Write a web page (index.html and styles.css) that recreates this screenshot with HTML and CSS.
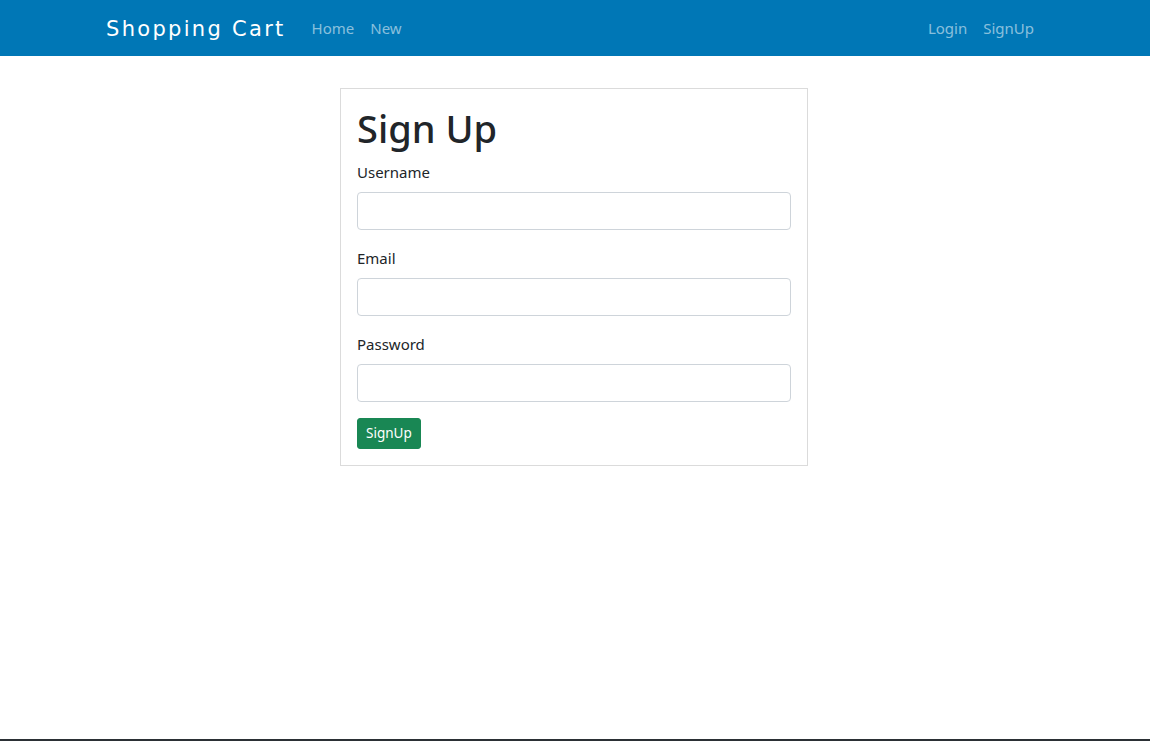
FILE: index.html
```html
<!DOCTYPE html>
<html lang="en">
<head>
<meta charset="utf-8">
<title>Shopping Cart</title>
<link rel="stylesheet" href="styles.css">
</head>
<body>
<div class="page">
  <nav class="navbar">
    <div class="container nav-inner">
      <a class="brand" href="#">Shopping Cart</a>
      <ul class="nav-links">
        <li><a href="#">Home</a></li>
        <li><a href="#">New</a></li>
      </ul>
      <ul class="nav-links nav-right">
        <li><a href="#">Login</a></li>
        <li><a href="#">SignUp</a></li>
      </ul>
    </div>
  </nav>
  <main class="main">
    <div class="card">
      <h1 class="title">Sign Up</h1>
      <form class="form">
        <div class="field">
          <label class="label" for="username">Username</label>
          <input class="input" id="username" type="text">
        </div>
        <div class="field">
          <label class="label" for="email">Email</label>
          <input class="input" id="email" type="email">
        </div>
        <div class="field">
          <label class="label" for="password">Password</label>
          <input class="input" id="password" type="password">
        </div>
        <button class="btn" type="button">SignUp</button>
      </form>
    </div>
  </main>
  <footer class="footer"></footer>
</div>
</body>
</html>
```
FILE: styles.css
```css
* { box-sizing: border-box; }
html, body { margin: 0; padding: 0; }
body {
  font-family: "Noto Sans", "Open Sans", sans-serif;
  font-size: 16px;
  line-height: 1.5;
  color: #212529;
  background: #fff;
}
.page {
  min-height: 100vh;
  display: flex;
  flex-direction: column;
}
.navbar {
  background: #0077b6;
  height: 56px;
  display: flex;
  align-items: center;
}
.container {
  width: 960px;
  margin: 0 auto;
  padding: 0 12px;
}
.nav-inner {
  display: flex;
  align-items: center;
}
.brand {
  font-family: "DejaVu Sans", sans-serif;
  font-size: 21px;
  letter-spacing: 2.3px;
  color: #fff;
  text-decoration: none;
  margin-right: 18px;
  margin-left: -1px;
  padding-top: 3px;
}
.nav-links {
  list-style: none;
  display: flex;
  margin: 0;
  padding: 0;
}
.nav-links a {
  display: block;
  padding: 8px 8px;
  color: rgba(255,255,255,0.55);
  text-decoration: none;
  font-size: 15px;
}
.nav-right { margin-left: auto; margin-right: 1px; }
.main {
  flex: 1;
  display: flex;
  justify-content: center;
  align-items: flex-start;
  padding-top: 32px;
}
.card {
  width: 468px;
  margin-left: -2px;
  border: 1px solid rgba(0,0,0,0.14);
  padding: 16px;
  background: #fff;
}
.title {
  font-size: 38px;
  font-weight: 500;
  line-height: 1.2;
  margin: 0 0 8px;
  padding-top: 1px;
}
.field { margin-bottom: 16px; }
.label {
  display: block;
  margin-bottom: 8px;
  font-size: 15px;
  line-height: 24px;
}
.input {
  display: block;
  width: 100%;
  height: 38px;
  border: 1px solid #ced4da;
  border-radius: 4px;
  padding: 6px 12px;
  font: inherit;
}
.btn {
  display: block;
  height: 31px;
  padding: 0 8px;
  background: #198754;
  color: #fff;
  border: 1px solid #198754;
  border-radius: 3px;
  font-family: inherit;
  font-size: 13.5px;
}
.footer {
  height: 2px;
  background: #2b3035;
}
```
